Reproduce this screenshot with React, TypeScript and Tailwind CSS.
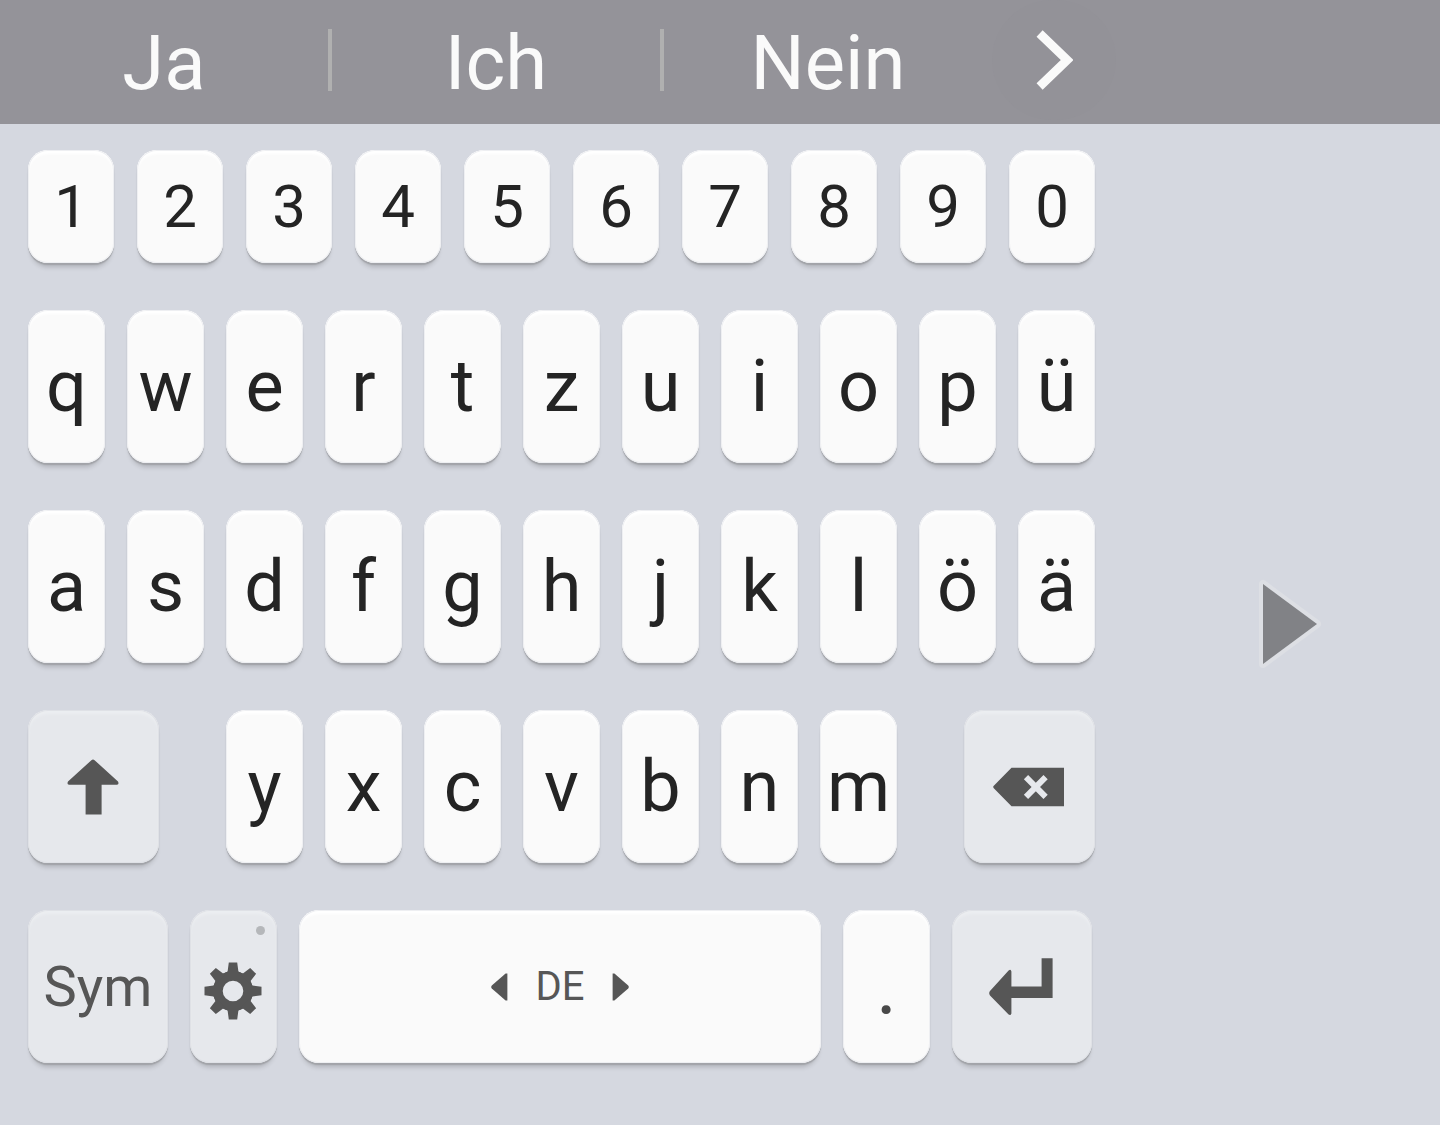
import React from "react";
import clsx from "clsx";

const SUGGESTIONS = ["Ja", "Ich", "Nein"];
const DIGITS = "1234567890".split("");
const TOP_ROW = "qwertzuiopü".split("");
const HOME_ROW = "asdfghjklöä".split("");
const BOTTOM_ROW = "yxcvbnm".split("");

interface KeyProps {
  label?: string;
  tone?: "light" | "gray";
  className?: string;
  children: React.ReactNode;
}

const Key: React.FC<KeyProps> = ({
  label,
  tone = "light",
  className,
  children,
}) => (
  <button
    type="button"
    aria-label={label}
    className={clsx(
      "flex items-center justify-center rounded-[20px]",
      tone === "light"
        ? "bg-[#fafafa] shadow-[inset_0_0_0_1px_#eeeff2,inset_0_4px_3px_#ffffff,0_2px_1px_#a2a4a9,0_7px_5px_-3px_rgba(0,0,0,0.18)]"
        : "bg-[#e6e8ec] text-[#565656] shadow-[inset_0_0_0_1px_#dfe1e6,inset_0_4px_3px_#eceef1,0_2px_1px_#a2a4a9,0_7px_5px_-3px_rgba(0,0,0,0.18)]",
      className
    )}
  >
    {children}
  </button>
);

const LetterRow: React.FC<{ letters: string[] }> = ({ letters }) => (
  <div className="flex h-[153px] gap-[22px]">
    {letters.map((letter) => (
      <Key key={letter} className="min-w-0 flex-1 text-7xl text-[#242424]">
        {letter}
      </Key>
    ))}
  </div>
);

const ShiftIcon = () => (
  <svg width="54" height="56" viewBox="0 0 54 56" fill="currentColor">
    <path d="M24.4 1.2Q26 0 27.6 1.2L51 22.6Q52.4 25.4 50 25.8H34.6V55.6H18.6V25.8H2Q-.4 25.4 1 22.6Z" />
  </svg>
);

const BackspaceIcon = () => (
  <svg width="74" height="40" viewBox="0 0 74 40">
    <path d="M18.5.7H71V39.3H18.5L.8 21.2Q-.4 20 .8 18.8Z" fill="currentColor" />
    <path d="M33 10.2 52.6 29.8M52.6 10.2 33 29.8" stroke="#e6e8ec" strokeWidth="6" />
  </svg>
);

const EnterIcon = () => (
  <svg width="66" height="58" viewBox="0 0 66 58" fill="currentColor">
    <path d="M52.6.2H63.6V40H22.4V55.4Q21.8 57.8 19.6 56.6L1 37.4Q-.6 35.2 1 33L19.6 12.6Q21.8 10.8 22.4 13.4V28.6H52.6Z" />
  </svg>
);

const GEAR_ANGLES = [0, 45, 90, 135, 180, 225, 270, 315];

const GearIcon = () => (
  <svg width="60" height="58" viewBox="-29 -29 60 58" fill="currentColor">
    <circle r="15.2" fill="none" stroke="currentColor" strokeWidth="9.8" />
    {GEAR_ANGLES.map((angle) => (
      <path
        key={angle}
        d="M-4.2-28.5H4.2L5.4-19.4Q8-18 9-17H-9Q-8-18-5.4-19.4Z"
        transform={`rotate(${angle})`}
      />
    ))}
  </svg>
);

const SpaceArrow: React.FC<{ flipped?: boolean }> = ({ flipped }) => (
  <svg
    width="17"
    height="28"
    viewBox="0 0 17 28"
    fill="currentColor"
    className={clsx(flipped && "rotate-180")}
  >
    <path d="M16.4.4V27.6H14.6L.8 15.4Q-.4 14 .8 12.6L14.6.4Z" />
  </svg>
);

const SuggestionBar = () => (
  <header className="flex h-[124px] items-center bg-[#949399] pb-1 text-[#fafafa]">
    {SUGGESTIONS.map((word, i) => (
      <React.Fragment key={word}>
        {i > 0 && <span className="h-[62px] w-1 shrink-0 bg-[#b0b0b0]" />}
        <button
          type="button"
          className="min-w-0 flex-1 pt-1.5 text-[76px] leading-none"
        >
          {word}
        </button>
      </React.Fragment>
    ))}
    <button
      type="button"
      aria-label="Mehr Vorschläge"
      className="mr-[324px] flex h-[120px] w-[124px] items-center justify-center rounded-full bg-[#939298]"
    >
      <svg width="38" height="60" viewBox="0 0 38 60" fill="none">
        <path d="M4.6 3.5 32.2 30 4.6 56.5" stroke="currentColor" strokeWidth="8.8" />
      </svg>
    </button>
  </header>
);

const App: React.FC = () => (
  <div className="flex min-h-screen flex-col bg-[#d5d8e0] font-['Roboto',sans-serif]">
    <SuggestionBar />
    <div className="flex flex-1">
      <main className="flex min-w-0 flex-1 flex-col gap-[47px] pt-[26px] pr-[45px] pl-7">
        <div className="flex h-[113px] gap-[23px]">
          {DIGITS.map((digit) => (
            <Key key={digit} className="min-w-0 flex-1 text-6xl text-[#242424]">
              {digit}
            </Key>
          ))}
        </div>
        <LetterRow letters={TOP_ROW} />
        <LetterRow letters={HOME_ROW} />

        <div className="flex gap-[67px]">
          <Key label="Umschalttaste" tone="gray" className="w-[131px]">
            <ShiftIcon />
          </Key>
          <div className="min-w-0 flex-1">
            <LetterRow letters={BOTTOM_ROW} />
          </div>
          <Key label="Löschen" tone="gray" className="w-[131px]">
            <BackspaceIcon />
          </Key>
        </div>

        <div className="flex h-[153px] gap-[22px] pr-[3px]">
          <Key tone="gray" className="w-[140px] text-[56px]">
            Sym
          </Key>
          <Key label="Einstellungen" tone="gray" className="relative w-[87px] pt-2">
            <span className="absolute top-4 right-3 size-[9px] rounded-full bg-[#b5b7ba]" />
            <GearIcon />
          </Key>
          <Key className="min-w-0 flex-1 gap-7 text-[40px] text-[#565656]">
            <SpaceArrow />
            DE
            <SpaceArrow flipped />
          </Key>
          <Key className="w-[87px] text-[80px] text-[#484848]">.</Key>
          <Key label="Eingabe" tone="gray" className="w-[140px]">
            <EnterIcon />
          </Key>
        </div>
      </main>

      {/* Moves the one-handed keyboard to the other side */}
      <aside className="flex w-[300px] items-center justify-center">
        <button type="button" aria-label="Tastatur nach rechts">
          <svg width="64" height="92" viewBox="0 0 64 92">
            <path
              d="M5 5V85L59 45Z"
              fill="#818286"
              stroke="#dddfe4"
              strokeWidth="8"
              strokeLinejoin="round"
              paintOrder="stroke"
            />
          </svg>
        </button>
      </aside>
    </div>
  </div>
);

export default App;
